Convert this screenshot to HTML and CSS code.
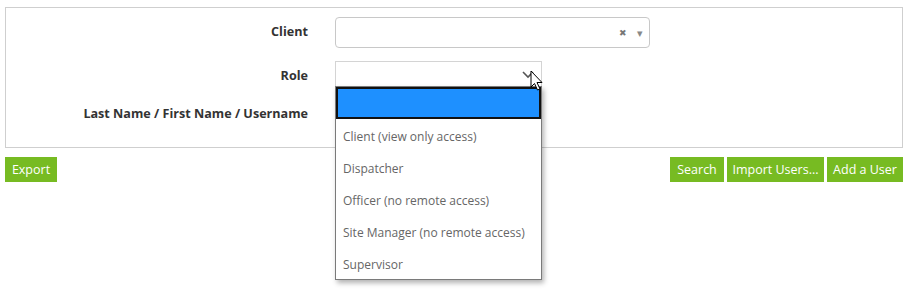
FILE: index.html
```html
<!DOCTYPE html>
<html>
<head>
<meta charset="utf-8">
<link rel="stylesheet" href="styles.css">
</head>
<body>
<div class="page">
  <div class="panel">
    <div class="row row-client">
      <label class="lbl">Client</label>
      <div class="select client-select">
        <span class="clear">&#x2716;</span>
        <span class="caret">&#x25BE;</span>
      </div>
    </div>
    <div class="row row-role">
      <label class="lbl">Role</label>
      <div class="role-wrap">
        <div class="select role-select">
          <svg class="chev" width="12" height="8" viewBox="0 0 12 8"><path d="M1 1 L6 6 L11 1" fill="none" stroke="#555" stroke-width="1.6"/></svg>
        </div>
        <ul class="dropdown">
          <li class="opt selected"></li>
          <li class="opt">Client (view only access)</li>
          <li class="opt">Dispatcher</li>
          <li class="opt">Officer (no remote access)</li>
          <li class="opt">Site Manager (no remote access)</li>
          <li class="opt">Supervisor</li>
        </ul>
        <svg class="cursor" width="14" height="22" viewBox="0 0 14 22"><path d="M1 1 L1 17 L4.5 13.5 L7.5 20 L10 19 L7 12.5 L12 12.5 Z" fill="#fff" stroke="#000" stroke-width="1" stroke-linejoin="round"/></svg>
      </div>
    </div>
    <div class="row row-name">
      <label class="lbl">Last Name / First Name / Username</label>
      <div class="name-input"></div>
    </div>
  </div>
  <div class="actions">
    <button class="btn btn-export">Export</button>
    <div class="right">
      <button class="btn btn-search">Search</button>
      <button class="btn btn-import">Import Users...</button>
      <button class="btn btn-add">Add a User</button>
    </div>
  </div>
</div>
</body>
</html>
```

FILE: styles.css
```css
* { box-sizing: border-box; }
html, body { margin: 0; padding: 0; background: #fff; }
html { height: 100%; }
body { min-height: 293px; font-family: "Open Sans", "Noto Sans", sans-serif; color: #333; }
.page { padding: 7px 10px 0 5px; width: 913px; }
.panel {
  border: 1px solid #cfcfcf;
  height: 141px;
  padding-top: 9px;
}
.row { display: grid; grid-template-columns: 302px 315px; column-gap: 27px; align-items: center; }
.lbl { text-align: right; font-weight: 700; font-size: 12.6px; color: #333; position: relative; top: -1px; }
.row-client { height: 31px; }
.row-role { height: 30px; margin-top: 13px; }
.row-name { height: 30px; margin-top: 8px; }
.select {
  height: 31px;
  border: 1px solid #c8c8c8;
  border-radius: 4px;
  background: #fff;
  position: relative;
}
.client-select { width: 315px; display: flex; align-items: center; justify-content: flex-end; padding-right: 6px; }
.clear { font-size: 9px; color: #777; margin-right: 10px; line-height: 1; }
.caret { font-size: 11px; color: #888; line-height: 1; }
.role-wrap { position: relative; width: 207px; height: 30px; }
.role-select { width: 207px; height: 30px; border-radius: 0; border-color: #d4d4d4; }
.chev { position: absolute; right: 7px; top: 9px; }
.dropdown {
  position: absolute;
  left: 0; top: 25px;
  width: 207px;
  margin: 0; padding: 0;
  list-style: none;
  background: #fff;
  border: 1px solid #7a7a7a;
  box-shadow: 2px 3px 5px rgba(0,0,0,0.3);
  z-index: 2;
}
.opt {
  height: 32px;
  line-height: 29px;
  padding-top: 3px;
  padding-left: 7px;
  font-size: 12px;
  color: #666;
  white-space: nowrap;
}
.opt.selected { background: #1e90ff; border: 2px solid #111; padding-top: 0; }
.cursor { position: absolute; left: 195px; top: 9px; z-index: 3; }
.name-input { height: 30px; }
.actions { display: flex; justify-content: space-between; margin-top: 9px; }
.right { display: flex; gap: 3px; }
.btn {
  font-family: "Open Sans", "Noto Sans", sans-serif;
  font-size: 12.5px;
  color: #fff;
  background: #77bb22;
  border: none;
  height: 25px;
  padding: 0;
  margin: 0;
  line-height: 25px;
  text-align: center;
}
.btn-export { width: 52px; }
.btn-search { width: 54px; }
.btn-import { width: 97px; }
.btn-add { width: 76px; }
```
